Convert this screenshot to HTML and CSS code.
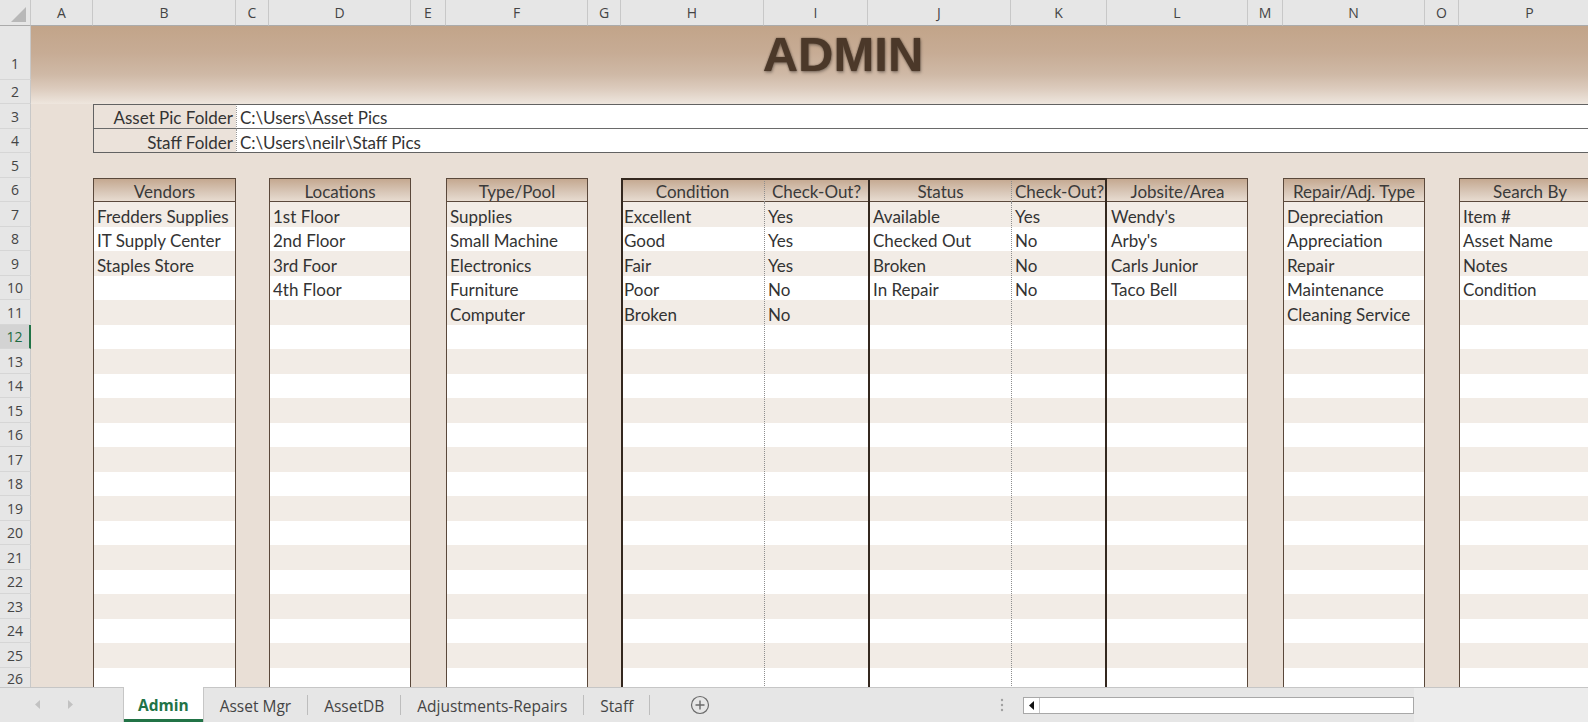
FILE: index.html
```html
<!DOCTYPE html>
<html lang="en">
<head>
<meta charset="utf-8">
<title>Admin</title>
<link rel="stylesheet" href="styles.css">
</head>
<body>
<div class="app">
  <div class="viewport">
    <div class="sheet">
      <div class="corner"><svg width="16" height="15" viewBox="0 0 16 15"><polygon points="15,0 15,15 0,15" fill="#b8b8b8"/></svg></div>
      <div class="ch">A</div><div class="ch">B</div><div class="ch">C</div><div class="ch">D</div>
      <div class="ch">E</div><div class="ch">F</div><div class="ch">G</div><div class="ch">H</div>
      <div class="ch">I</div><div class="ch">J</div><div class="ch">K</div><div class="ch">L</div>
      <div class="ch">M</div><div class="ch">N</div><div class="ch">O</div><div class="ch">P</div>

      <div class="rh r1">1</div><div class="rh">2</div><div class="rh">3</div><div class="rh">4</div>
      <div class="rh">5</div><div class="rh">6</div><div class="rh">7</div><div class="rh">8</div>
      <div class="rh">9</div><div class="rh">10</div><div class="rh">11</div><div class="rh sel">12</div>
      <div class="rh">13</div><div class="rh">14</div><div class="rh">15</div><div class="rh">16</div>
      <div class="rh">17</div><div class="rh">18</div><div class="rh">19</div><div class="rh">20</div>
      <div class="rh">21</div><div class="rh">22</div><div class="rh">23</div><div class="rh">24</div>
      <div class="rh">25</div><div class="rh r26">26</div>

      <div class="band"><div class="title">ADMIN</div></div>

      <div class="paths">
        <div class="cell plabel top">Asset Pic Folder</div>
        <div class="cell pval top">C:\Users\Asset Pics</div>
        <div class="cell plabel">Staff Folder</div>
        <div class="cell pval">C:\Users\neilr\Staff Pics</div>
      </div>

      <div class="tbl col-b">
        <div class="cell th">Vendors</div>
        <div class="tb">
          <div class="cell td">Fredders Supplies</div>
          <div class="cell td">IT Supply Center</div>
          <div class="cell td">Staples Store</div>
        </div>
      </div>

      <div class="tbl col-d">
        <div class="cell th">Locations</div>
        <div class="tb">
          <div class="cell td">1st Floor</div>
          <div class="cell td">2nd Floor</div>
          <div class="cell td">3rd Foor</div>
          <div class="cell td">4th Floor</div>
        </div>
      </div>

      <div class="tbl col-f">
        <div class="cell th">Type/Pool</div>
        <div class="tb">
          <div class="cell td">Supplies</div>
          <div class="cell td">Small Machine</div>
          <div class="cell td">Electronics</div>
          <div class="cell td">Furniture</div>
          <div class="cell td">Computer</div>
        </div>
      </div>

      <div class="grp">
        <div class="cell th">Condition</div>
        <div class="cell th dot">Check-Out?</div>
        <div class="cell th thick">Status</div>
        <div class="cell th dot">Check-Out?</div>
        <div class="tb">
          <div class="cell td">Excellent</div>
          <div class="cell td">Good</div>
          <div class="cell td">Fair</div>
          <div class="cell td">Poor</div>
          <div class="cell td">Broken</div>
        </div>
        <div class="tb dot">
          <div class="cell td">Yes</div>
          <div class="cell td">Yes</div>
          <div class="cell td">Yes</div>
          <div class="cell td">No</div>
          <div class="cell td">No</div>
        </div>
        <div class="tb thick">
          <div class="cell td">Available</div>
          <div class="cell td">Checked Out</div>
          <div class="cell td">Broken</div>
          <div class="cell td">In Repair</div>
        </div>
        <div class="tb dot">
          <div class="cell td">Yes</div>
          <div class="cell td">No</div>
          <div class="cell td">No</div>
          <div class="cell td">No</div>
        </div>
      </div>

      <div class="tbl col-l">
        <div class="cell th">Jobsite/Area</div>
        <div class="tb">
          <div class="cell td">Wendy's</div>
          <div class="cell td">Arby's</div>
          <div class="cell td">Carls Junior</div>
          <div class="cell td">Taco Bell</div>
        </div>
      </div>

      <div class="tbl col-n">
        <div class="cell th">Repair/Adj. Type</div>
        <div class="tb">
          <div class="cell td">Depreciation</div>
          <div class="cell td">Appreciation</div>
          <div class="cell td">Repair</div>
          <div class="cell td">Maintenance</div>
          <div class="cell td">Cleaning Service</div>
        </div>
      </div>

      <div class="tbl col-p">
        <div class="cell th">Search By</div>
        <div class="tb">
          <div class="cell td">Item #</div>
          <div class="cell td">Asset Name</div>
          <div class="cell td">Notes</div>
          <div class="cell td">Condition</div>
        </div>
      </div>
    </div>
  </div>

  <div class="tabbar">
    <div class="nav">
      <svg width="123" height="34" viewBox="0 0 123 34">
        <polygon points="40,12 40,21 35,16.5" fill="#c2c2c2"/>
        <polygon points="68,12 68,21 73,16.5" fill="#c2c2c2"/>
      </svg>
    </div>
    <div class="tabs">
      <div class="tab on">Admin</div>
      <div class="tab">Asset Mgr</div>
      <div class="tab">AssetDB</div>
      <div class="tab">Adjustments-Repairs</div>
      <div class="tab">Staff</div>
      <div class="add">
        <svg width="20" height="20" viewBox="0 0 20 20">
          <circle cx="10" cy="10" r="8.5" fill="none" stroke="#6a6a6a" stroke-width="1.2"/>
          <path d="M10 5.5v9M5.5 10h9" stroke="#6a6a6a" stroke-width="1.4"/>
        </svg>
      </div>
    </div>
    <div class="split">
      <svg width="4" height="14" viewBox="0 0 4 14">
        <circle cx="2" cy="2" r="1.2" fill="#a0a0a0"/>
        <circle cx="2" cy="7" r="1.2" fill="#a0a0a0"/>
        <circle cx="2" cy="12" r="1.2" fill="#a0a0a0"/>
      </svg>
    </div>
    <div class="hscroll">
      <div class="larr"><svg width="6" height="9" viewBox="0 0 6 9"><polygon points="5,0 5,9 0,4.5" fill="#111"/></svg></div>
    </div>
    <div class="rest"></div>
  </div>
</div>
</body>
</html>
```

FILE: styles.css
```css
* {
  box-sizing: border-box;
  margin: 0;
  padding: 0;
}

html, body {
  width: 1588px;
  height: 722px;
  overflow: hidden;
}

body {
  font-family: Lato, "Open Sans", sans-serif;
  background: #ffffff;
  color: #333333;
}

.app {
  display: flex;
  flex-direction: column;
  height: 722px;
}

.viewport {
  height: 687px;
  flex: none;
  overflow: hidden;
}

.sheet {
  display: grid;
  grid-template-columns: 31px 62px 143px 33px 142px 35px 142px 33px 143px 104px 143px 96px 141px 35px 142px 34px 142px;
  grid-template-rows: 26px 54px repeat(12, 24px 25px) 24px;
  width: 1601px;
  background: #e9dfd6;
}

/* headers */
.corner {
  grid-row: 1;
  grid-column: 1;
  background: #e6e6e6;
  border-right: 1px solid #c8c8c8;
  border-bottom: 1px solid #ababab;
  display: flex;
  align-items: flex-end;
  justify-content: flex-end;
  padding: 0 3px 3px 0;
}

.ch {
  grid-row: 1;
  background: #e6e6e6;
  border-right: 1px solid #c8c8c8;
  border-bottom: 1px solid #ababab;
  display: flex;
  align-items: center;
  justify-content: center;
  font: 14px "Open Sans", sans-serif;
  color: #444444;
}

.rh {
  grid-column: 1;
  background: #e6e6e6;
  border-right: 1px solid #c8c8c8;
  border-bottom: 1px solid #d6d6d6;
  display: flex;
  align-items: center;
  justify-content: center;
  font: 14px "Open Sans", sans-serif;
  color: #444444;
}

.rh.r1 {
  padding-top: 22px;
}

.rh.r26 {
  align-items: flex-start;
  padding-top: 1px;
}

.rh.sel {
  background: #d3d3d3;
  border-right: 2px solid #217346;
  color: #1e6b41;
}

/* title band */
.band {
  grid-column: 2 / -1;
  grid-row: 2 / 4;
  background: linear-gradient(#c2a489 0%, #c7ac95 35%, #cfb9a6 62%, #dccbbd 80%, #eee6de 100%);
}

.title {
  height: 54px;
  line-height: 54px;
  padding-left: 54px;
  text-align: center;
  font: bold 49px "Liberation Sans", Arial, sans-serif;
  color: #4b3829;
  text-shadow: 0 0 2px rgba(30, 18, 10, 0.55), 1px 2px 3px rgba(0, 0, 0, 0.25);
}

/* text cells */
.cell {
  display: flex;
  align-items: flex-end;
  padding-bottom: 2px;
  font-size: 17px;
  line-height: 17px;
  white-space: nowrap;
  color: #333333;
}

/* folder paths */
.paths {
  grid-column: 3 / -1;
  grid-row: 4 / 6;
  display: grid;
  grid-template-columns: 143px 1fr;
  grid-template-rows: 25px 24px;
  position: relative;
}

.paths::after {
  content: "";
  position: absolute;
  inset: 0;
  border: 1px solid #626262;
  border-right: none;
  pointer-events: none;
}

.plabel {
  justify-content: flex-end;
  padding-right: 3px;
  background: #ebe2da;
}

.pval {
  background: #ffffff;
  border-left: 1px dotted #9a9a9a;
  padding-left: 3px;
}

.paths .top {
  border-bottom: 1px solid #6a6a6a;
}

/* tables */
.tbl {
  grid-row: 7 / 28;
  display: flex;
  flex-direction: column;
  position: relative;
}

.tbl::after {
  content: "";
  position: absolute;
  inset: 0;
  border: 1px solid #5a483b;
  border-bottom: none;
  pointer-events: none;
}

.col-b { grid-column: 3; }
.col-d { grid-column: 5; }
.col-f { grid-column: 7; }
.col-l { grid-column: 13; }
.col-n { grid-column: 15; }
.col-p { grid-column: 17; }

.col-l::after {
  border-left: none;
}

.th {
  height: 24px;
  flex: none;
  justify-content: center;
  background: linear-gradient(#c3a68d, #d9c8b9 60%, #e9ded3);
  box-shadow: inset 0 -1px 0 #5a483b;
  color: #3a3a3a;
}

.tb {
  flex: 1;
  background: repeating-linear-gradient(#f2ece6 0 25px, #ffffff 25px 49px);
}

.td {
  padding-left: 4px;
}

.td:nth-child(odd) { height: 25px; }
.td:nth-child(even) { height: 24px; }

/* condition / status group */
.grp {
  grid-column: 9 / 13;
  grid-row: 7 / 28;
  display: grid;
  grid-template-columns: 143px 104px 143px 96px;
  grid-template-rows: 24px 1fr;
  position: relative;
}

.grp::after {
  content: "";
  position: absolute;
  inset: 0;
  border: 2px solid #34281f;
  border-bottom: none;
  pointer-events: none;
}

.grp .td {
  padding-left: 3px;
}

.grp .dot {
  border-left: 1px dotted #8e8e8e;
}

.grp .thick {
  border-left: 2px solid #34281f;
}

/* tab bar */
.tabbar {
  height: 35px;
  flex: none;
  display: flex;
  background: #e6e6e6;
  border-top: 1px solid #c6c6c6;
}

.nav {
  width: 123px;
  flex: none;
  display: flex;
  align-items: center;
}

.tabs {
  width: 872px;
  flex: none;
  display: flex;
  align-items: center;
}

.tab {
  height: 20px;
  line-height: 20px;
  padding: 0 16px;
  border-right: 1px solid #bdbdbd;
  font: 15.5px "Open Sans", sans-serif;
  color: #444444;
}

.tab.on {
  align-self: stretch;
  height: auto;
  margin-top: -1px;
  display: flex;
  align-items: center;
  padding: 0 14px;
  background: #ffffff;
  border-left: 1px solid #c6c6c6;
  border-right: 1px solid #c6c6c6;
  box-shadow: inset 0 -3px 0 #217346;
  color: #217346;
  font-weight: 700;
}

.add {
  margin-left: 40px;
  display: flex;
  align-items: center;
}

.split {
  width: 14px;
  flex: none;
  display: flex;
  align-items: center;
  justify-content: center;
}

.hscroll {
  margin-left: 14px;
  width: 391px;
  height: 17px;
  flex: none;
  align-self: center;
  background: #ffffff;
  border: 1px solid #a8a8a8;
  display: flex;
}

.larr {
  width: 16px;
  border-right: 1px solid #c6c6c6;
  display: flex;
  align-items: center;
  justify-content: center;
}

.rest {
  flex: 1;
  background: #ececec;
}
```
